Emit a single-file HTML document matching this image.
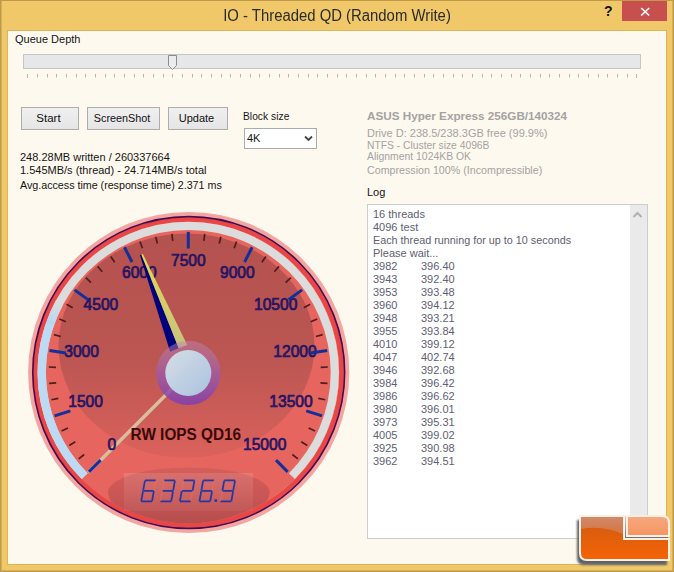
<!DOCTYPE html>
<html><head><meta charset="utf-8">
<style>
*{margin:0;padding:0;box-sizing:border-box}
html,body{width:674px;height:572px;overflow:hidden;background:#f0c869}
body{position:relative;font-family:"Liberation Sans",sans-serif}
.a{position:absolute;white-space:nowrap}
#frame{position:absolute;left:0;top:0;width:674px;height:572px;background:#f0c869;border:1px solid #c09a48;box-shadow:inset 1px 0 0 #d4b058, inset -1px 0 0 #d4b058, inset 0 -1px 0 #d4b058}
#client{position:absolute;left:7px;top:30px;width:660px;height:535px;background:#fef9ee;border:1px solid #dcb656}
.title{left:0;width:674px;text-align:center;top:7.3px;font-size:16px;color:#2b2b2b;transform:scaleX(0.93);transform-origin:337px 0}
.btn{position:absolute;height:23px;top:107px;border:1px solid #adadad;background:linear-gradient(#f0f0f0,#e5e5e5);font-size:11.5px;color:#111;text-align:center;line-height:21px}
.t11{font-size:11px;color:#151515}
.gray{font-size:11px;color:#a3a3a3}
.log{font-size:11px;color:#606070;line-height:13px}
</style></head><body>
<div id="frame"></div>
<div id="client"></div>
<div class="a title">IO - Threaded QD (Random Write)</div>
<!-- help & close -->
<div class="a" style="left:604px;top:3px;font-size:14px;font-weight:bold;color:#111">?</div>
<div class="a" style="left:622px;top:1px;width:45px;height:20px;background:#c7504f"></div>
<svg class="a" style="left:0;top:0" width="674" height="30"><path d="M641.2 8 L649.2 15.5 M649.2 8 L641.2 15.5" stroke="#fff" stroke-width="1.6"/></svg>

<div class="a t11" style="left:15px;top:33px;font-size:11px">Queue Depth</div>
<!-- slider -->
<div class="a" style="left:23px;top:54px;width:618px;height:15px;background:#e6e7e8;border:1px solid #c6c6c6"></div>
<svg class="a" style="left:0;top:50px" width="674" height="32"><line x1="27.5" y1="24" x2="27.5" y2="28" stroke="#b4b4b4" stroke-width="1"></line><line x1="37.5" y1="24" x2="37.5" y2="27.5" stroke="#b4b4b4" stroke-width="1"></line><line x1="47.5" y1="24" x2="47.5" y2="27.5" stroke="#b4b4b4" stroke-width="1"></line><line x1="56.5" y1="24" x2="56.5" y2="27.5" stroke="#b4b4b4" stroke-width="1"></line><line x1="66.5" y1="24" x2="66.5" y2="27.5" stroke="#b4b4b4" stroke-width="1"></line><line x1="76.5" y1="24" x2="76.5" y2="27.5" stroke="#b4b4b4" stroke-width="1"></line><line x1="85.5" y1="24" x2="85.5" y2="27.5" stroke="#b4b4b4" stroke-width="1"></line><line x1="95.5" y1="24" x2="95.5" y2="27.5" stroke="#b4b4b4" stroke-width="1"></line><line x1="105.5" y1="24" x2="105.5" y2="27.5" stroke="#b4b4b4" stroke-width="1"></line><line x1="114.5" y1="24" x2="114.5" y2="27.5" stroke="#b4b4b4" stroke-width="1"></line><line x1="124.5" y1="24" x2="124.5" y2="27.5" stroke="#b4b4b4" stroke-width="1"></line><line x1="134.5" y1="24" x2="134.5" y2="27.5" stroke="#b4b4b4" stroke-width="1"></line><line x1="143.5" y1="24" x2="143.5" y2="27.5" stroke="#b4b4b4" stroke-width="1"></line><line x1="153.5" y1="24" x2="153.5" y2="27.5" stroke="#b4b4b4" stroke-width="1"></line><line x1="163.5" y1="24" x2="163.5" y2="27.5" stroke="#b4b4b4" stroke-width="1"></line><line x1="172.5" y1="24" x2="172.5" y2="27.5" stroke="#b4b4b4" stroke-width="1"></line><line x1="182.5" y1="24" x2="182.5" y2="27.5" stroke="#b4b4b4" stroke-width="1"></line><line x1="192.5" y1="24" x2="192.5" y2="27.5" stroke="#b4b4b4" stroke-width="1"></line><line x1="201.5" y1="24" x2="201.5" y2="27.5" stroke="#b4b4b4" stroke-width="1"></line><line x1="211.5" y1="24" x2="211.5" y2="27.5" stroke="#b4b4b4" stroke-width="1"></line><line x1="221.5" y1="24" x2="221.5" y2="27.5" stroke="#b4b4b4" stroke-width="1"></line><line x1="230.5" y1="24" x2="230.5" y2="27.5" stroke="#b4b4b4" stroke-width="1"></line><line x1="240.5" y1="24" x2="240.5" y2="27.5" stroke="#b4b4b4" stroke-width="1"></line><line x1="250.5" y1="24" x2="250.5" y2="27.5" stroke="#b4b4b4" stroke-width="1"></line><line x1="259.5" y1="24" x2="259.5" y2="27.5" stroke="#b4b4b4" stroke-width="1"></line><line x1="269.5" y1="24" x2="269.5" y2="27.5" stroke="#b4b4b4" stroke-width="1"></line><line x1="279.5" y1="24" x2="279.5" y2="27.5" stroke="#b4b4b4" stroke-width="1"></line><line x1="288.5" y1="24" x2="288.5" y2="27.5" stroke="#b4b4b4" stroke-width="1"></line><line x1="298.5" y1="24" x2="298.5" y2="27.5" stroke="#b4b4b4" stroke-width="1"></line><line x1="308.5" y1="24" x2="308.5" y2="27.5" stroke="#b4b4b4" stroke-width="1"></line><line x1="317.5" y1="24" x2="317.5" y2="27.5" stroke="#b4b4b4" stroke-width="1"></line><line x1="327.5" y1="24" x2="327.5" y2="27.5" stroke="#b4b4b4" stroke-width="1"></line><line x1="337.5" y1="24" x2="337.5" y2="27.5" stroke="#b4b4b4" stroke-width="1"></line><line x1="346.5" y1="24" x2="346.5" y2="27.5" stroke="#b4b4b4" stroke-width="1"></line><line x1="356.5" y1="24" x2="356.5" y2="27.5" stroke="#b4b4b4" stroke-width="1"></line><line x1="366.5" y1="24" x2="366.5" y2="27.5" stroke="#b4b4b4" stroke-width="1"></line><line x1="375.5" y1="24" x2="375.5" y2="27.5" stroke="#b4b4b4" stroke-width="1"></line><line x1="385.5" y1="24" x2="385.5" y2="27.5" stroke="#b4b4b4" stroke-width="1"></line><line x1="395.5" y1="24" x2="395.5" y2="27.5" stroke="#b4b4b4" stroke-width="1"></line><line x1="404.5" y1="24" x2="404.5" y2="27.5" stroke="#b4b4b4" stroke-width="1"></line><line x1="414.5" y1="24" x2="414.5" y2="27.5" stroke="#b4b4b4" stroke-width="1"></line><line x1="424.5" y1="24" x2="424.5" y2="27.5" stroke="#b4b4b4" stroke-width="1"></line><line x1="433.5" y1="24" x2="433.5" y2="27.5" stroke="#b4b4b4" stroke-width="1"></line><line x1="443.5" y1="24" x2="443.5" y2="27.5" stroke="#b4b4b4" stroke-width="1"></line><line x1="453.5" y1="24" x2="453.5" y2="27.5" stroke="#b4b4b4" stroke-width="1"></line><line x1="462.5" y1="24" x2="462.5" y2="27.5" stroke="#b4b4b4" stroke-width="1"></line><line x1="472.5" y1="24" x2="472.5" y2="27.5" stroke="#b4b4b4" stroke-width="1"></line><line x1="482.5" y1="24" x2="482.5" y2="27.5" stroke="#b4b4b4" stroke-width="1"></line><line x1="491.5" y1="24" x2="491.5" y2="27.5" stroke="#b4b4b4" stroke-width="1"></line><line x1="501.5" y1="24" x2="501.5" y2="27.5" stroke="#b4b4b4" stroke-width="1"></line><line x1="511.5" y1="24" x2="511.5" y2="27.5" stroke="#b4b4b4" stroke-width="1"></line><line x1="520.5" y1="24" x2="520.5" y2="27.5" stroke="#b4b4b4" stroke-width="1"></line><line x1="530.5" y1="24" x2="530.5" y2="27.5" stroke="#b4b4b4" stroke-width="1"></line><line x1="540.5" y1="24" x2="540.5" y2="27.5" stroke="#b4b4b4" stroke-width="1"></line><line x1="549.5" y1="24" x2="549.5" y2="27.5" stroke="#b4b4b4" stroke-width="1"></line><line x1="559.5" y1="24" x2="559.5" y2="27.5" stroke="#b4b4b4" stroke-width="1"></line><line x1="569.5" y1="24" x2="569.5" y2="27.5" stroke="#b4b4b4" stroke-width="1"></line><line x1="578.5" y1="24" x2="578.5" y2="27.5" stroke="#b4b4b4" stroke-width="1"></line><line x1="588.5" y1="24" x2="588.5" y2="27.5" stroke="#b4b4b4" stroke-width="1"></line><line x1="598.5" y1="24" x2="598.5" y2="27.5" stroke="#b4b4b4" stroke-width="1"></line><line x1="607.5" y1="24" x2="607.5" y2="27.5" stroke="#b4b4b4" stroke-width="1"></line><line x1="617.5" y1="24" x2="617.5" y2="27.5" stroke="#b4b4b4" stroke-width="1"></line><line x1="627.5" y1="24" x2="627.5" y2="27.5" stroke="#b4b4b4" stroke-width="1"></line><line x1="636.5" y1="24" x2="636.5" y2="28" stroke="#b4b4b4" stroke-width="1"></line></svg>
<svg class="a" style="left:166px;top:53px" width="14" height="20"><path d="M2.5 2.5 H10.5 V12.5 L6.5 16.5 L2.5 12.5 Z" fill="#ececec" stroke="#8c8c8c" stroke-width="1"/></svg>

<div class="btn" style="left:21px;width:58px;text-indent:-3px">Start</div>
<div class="btn" style="left:87px;width:73px;font-size:10.8px;text-indent:-3px">ScreenShot</div>
<div class="btn" style="left:168px;width:60px;font-size:11px;text-indent:-3px">Update</div>

<div class="a t11" style="left:243px;top:111px;font-size:10.2px;letter-spacing:0.05px">Block size</div>
<div class="a" style="left:244px;top:128px;width:73px;height:21px;background:#fff;border:1px solid #ababab"></div>
<div class="a t11" style="left:247px;top:132px">4K</div>
<svg class="a" style="left:300px;top:132px" width="16" height="12"><path d="M5 4.5 L8.5 8 L12 4.5" fill="none" stroke="#444" stroke-width="1.8"/></svg>

<div class="a t11" style="left:20px;top:151px">248.28MB written / 260337664</div>
<div class="a t11" style="left:20px;top:164px">1.545MB/s (thread) - 24.714MB/s total</div>
<div class="a t11" style="left:20px;top:179px;font-size:10.75px;letter-spacing:-0.03px">Avg.access time (response time) 2.371 ms</div>

<div class="a gray" style="left:367px;top:109px;font-weight:bold;font-size:11.7px">ASUS Hyper Express 256GB/140324</div>
<div class="a gray" style="left:367px;top:127px">Drive D: 238.5/238.3GB free (99.9%)</div>
<div class="a gray" style="left:367px;top:140px;font-size:10.3px">NTFS - Cluster size 4096B</div>
<div class="a gray" style="left:367px;top:151px;font-size:10.4px">Alignment 1024KB OK</div>
<div class="a gray" style="left:367px;top:164px;font-size:10.7px">Compression 100% (Incompressible)</div>
<div class="a t11" style="left:367px;top:186px">Log</div>

<!-- log box -->
<div class="a" style="left:367px;top:204px;width:281px;height:335px;background:#fff;border:1px solid #cdcdcd"></div>
<div class="a" style="left:630px;top:205px;width:17px;height:333px;background:#eaeaea"></div>
<svg class="a" style="left:628px;top:206px" width="20" height="16"><path d="M5.5 11 L9.5 7 L13.5 11" fill="none" stroke="#b0b0b0" stroke-width="2"/></svg>
<div class="a log" style="left:373px;top:208px">16 threads<br>4096 test<br><span style="font-size:10.8px">Each thread running for up to 10 seconds</span><br>Please wait...</div>
<div class="a log" style="left:373px;top:260px">3982<br>3943<br>3953<br>3960<br>3948<br>3955<br>4010<br>4047<br>3946<br>3984<br>3986<br>3980<br>3973<br>4005<br>3925<br>3962</div>
<div class="a log" style="left:421px;top:260px">396.40<br>392.40<br>393.48<br>394.12<br>393.21<br>393.84<br>399.12<br>402.74<br>392.68<br>396.42<br>396.62<br>396.01<br>395.31<br>399.02<br>390.98<br>394.51</div>

<svg class="a" style="left:0;top:0" width="674" height="572"><defs><clipPath id="faceclip"><circle cx="188.3" cy="372.5" r="150.8"></circle></clipPath><linearGradient id="ringg" x1="0" y1="0" x2="0" y2="1"><stop offset="0" stop-color="#c088b0" stop-opacity="0.45"></stop><stop offset="0.5" stop-color="#9c5cac" stop-opacity="0.72"></stop><stop offset="1" stop-color="#8440a8" stop-opacity="0.95"></stop></linearGradient><linearGradient id="hubg" x1="0" y1="0" x2="1" y2="1"><stop offset="0" stop-color="#d6dde6"></stop><stop offset="1" stop-color="#a9c3df"></stop></linearGradient><linearGradient id="darkg" x1="0" y1="0" x2="0" y2="1"><stop offset="0" stop-color="#b4524f"></stop><stop offset="0.55" stop-color="#bb5652"></stop><stop offset="0.8" stop-color="#cc5c57"></stop><stop offset="1" stop-color="#dc625c"></stop></linearGradient><linearGradient id="dispg" x1="0" y1="0" x2="0" y2="1"><stop offset="0" stop-color="#d45e5a"></stop><stop offset="0.5" stop-color="#c85654"></stop><stop offset="1" stop-color="#b24e4e"></stop></linearGradient><linearGradient id="rectg" x1="0" y1="0" x2="0" y2="1"><stop offset="0" stop-color="#ffffff" stop-opacity="0.12"></stop><stop offset="1" stop-color="#ffffff" stop-opacity="0.04"></stop></linearGradient><linearGradient id="blueend" gradientUnits="userSpaceOnUse" x1="50.203" y1="323.597" x2="59.553" y2="302.596"><stop offset="0" stop-color="#b8d6f2"></stop><stop offset="1" stop-color="#dcdcdc"></stop></linearGradient><linearGradient id="ndl" x1="0" y1="0" x2="0" y2="1"><stop offset="0" stop-color="#e2dc50"></stop><stop offset="1" stop-color="#c8c080"></stop></linearGradient></defs><circle cx="188.7" cy="372.5" r="160.6" fill="#f3a6a1"></circle><circle cx="188.6" cy="372.5" r="152.9" fill="none" stroke="#ea4646" stroke-width="4.6"></circle><circle cx="188.7" cy="372.5" r="155.9" fill="none" stroke="#4a0a4c" stroke-width="1.7"></circle><circle cx="188.3" cy="372.5" r="150.8" fill="#e6665f"></circle><g clip-path="url(#faceclip)"><ellipse cx="186.5" cy="345.8" rx="128" ry="112.2" fill="url(#darkg)"></ellipse><path d="M108 492 A80.8 24.5 0 0 1 269.6 492 A80.8 34 0 0 1 108 492 Z" fill="url(#dispg)"></path></g><rect x="124" y="473" width="129" height="38" fill="url(#rectg)"></rect><path d="M84.67 476.13 A146.55 146.55 0 1 1 291.93 476.13" fill="none" stroke="#dcdcdc" stroke-width="8.3"></path><path d="M84.67 476.13 A146.55 146.55 0 0 1 50.16 323.58" fill="none" stroke="#bddaf5" stroke-width="8.3"></path><path d="M49.99 324.06 A146.55 146.55 0 0 1 59.51 302.57" fill="none" stroke="url(#blueend)" stroke-width="8.3"></path><line x1="188.3" y1="372.5" x2="88.244" y2="472.556" stroke="#d8be9e" stroke-width="3.4"></line><text x="111.9" y="450.2" text-anchor="middle" textLength="8.7" lengthAdjust="spacingAndGlyphs" font-family="Liberation Sans" font-size="15.9" fill="#2a1e80" stroke="#1e0e56" stroke-width="0.7">0</text><text x="85.6" y="407.2" text-anchor="middle" textLength="34.6" lengthAdjust="spacingAndGlyphs" font-family="Liberation Sans" font-size="15.9" fill="#2a1e80" stroke="#1e0e56" stroke-width="0.7">1500</text><text x="81.6" y="356.9" text-anchor="middle" textLength="34.6" lengthAdjust="spacingAndGlyphs" font-family="Liberation Sans" font-size="15.9" fill="#2a1e80" stroke="#1e0e56" stroke-width="0.7">3000</text><text x="100.9" y="310.3" text-anchor="middle" textLength="34.6" lengthAdjust="spacingAndGlyphs" font-family="Liberation Sans" font-size="15.9" fill="#2a1e80" stroke="#1e0e56" stroke-width="0.7">4500</text><text x="139.3" y="277.6" text-anchor="middle" textLength="34.6" lengthAdjust="spacingAndGlyphs" font-family="Liberation Sans" font-size="15.9" fill="#2a1e80" stroke="#1e0e56" stroke-width="0.7">6000</text><text x="188.3" y="265.8" text-anchor="middle" textLength="34.6" lengthAdjust="spacingAndGlyphs" font-family="Liberation Sans" font-size="15.9" fill="#2a1e80" stroke="#1e0e56" stroke-width="0.7">7500</text><text x="237.3" y="277.6" text-anchor="middle" textLength="34.6" lengthAdjust="spacingAndGlyphs" font-family="Liberation Sans" font-size="15.9" fill="#2a1e80" stroke="#1e0e56" stroke-width="0.7">9000</text><text x="275.7" y="310.3" text-anchor="middle" textLength="43.3" lengthAdjust="spacingAndGlyphs" font-family="Liberation Sans" font-size="15.9" fill="#2a1e80" stroke="#1e0e56" stroke-width="0.7">10500</text><text x="295.0" y="356.9" text-anchor="middle" textLength="43.3" lengthAdjust="spacingAndGlyphs" font-family="Liberation Sans" font-size="15.9" fill="#2a1e80" stroke="#1e0e56" stroke-width="0.7">12000</text><text x="291.0" y="407.2" text-anchor="middle" textLength="43.3" lengthAdjust="spacingAndGlyphs" font-family="Liberation Sans" font-size="15.9" fill="#2a1e80" stroke="#1e0e56" stroke-width="0.7">13500</text><text x="264.7" y="450.2" text-anchor="middle" textLength="43.3" lengthAdjust="spacingAndGlyphs" font-family="Liberation Sans" font-size="15.9" fill="#2a1e80" stroke="#1e0e56" stroke-width="0.7">15000</text><line x1="100.619" y1="460.181" x2="88.881" y2="471.919" stroke="#12309a" stroke-width="3"></line><line x1="84.246" y1="454.53" x2="78.67" y2="458.926" stroke="#4e1e1e" stroke-width="1.7"></line><line x1="75.325" y1="441.731" x2="69.271" y2="445.441" stroke="#4e1e1e" stroke-width="1.7"></line><line x1="67.971" y1="427.972" x2="61.523" y2="430.945" stroke="#4e1e1e" stroke-width="1.7"></line><line x1="70.369" y1="410.818" x2="54.581" y2="415.948" stroke="#12309a" stroke-width="3"></line><line x1="58.346" y1="398.349" x2="51.382" y2="399.735" stroke="#4e1e1e" stroke-width="1.7"></line><line x1="56.208" y1="382.896" x2="49.13" y2="383.453" stroke="#4e1e1e" stroke-width="1.7"></line><line x1="55.902" y1="367.298" x2="48.808" y2="367.019" stroke="#4e1e1e" stroke-width="1.7"></line><line x1="65.827" y1="353.102" x2="49.431" y2="350.505" stroke="#12309a" stroke-width="3"></line><line x1="60.775" y1="336.534" x2="53.941" y2="334.607" stroke="#4e1e1e" stroke-width="1.7"></line><line x1="65.886" y1="321.794" x2="59.326" y2="319.077" stroke="#4e1e1e" stroke-width="1.7"></line><line x1="72.694" y1="307.758" x2="66.5" y2="304.288" stroke="#4e1e1e" stroke-width="1.7"></line><line x1="87.982" y1="299.615" x2="74.552" y2="289.857" stroke="#12309a" stroke-width="3"></line><line x1="91.002" y1="282.559" x2="85.789" y2="277.739" stroke="#4e1e1e" stroke-width="1.7"></line><line x1="102.248" y1="271.746" x2="97.637" y2="266.347" stroke="#4e1e1e" stroke-width="1.7"></line><line x1="114.687" y1="262.33" x2="110.742" y2="256.427" stroke="#4e1e1e" stroke-width="1.7"></line><line x1="132.005" y1="262.015" x2="124.469" y2="247.224" stroke="#12309a" stroke-width="3"></line><line x1="142.439" y1="248.19" x2="139.982" y2="241.528" stroke="#4e1e1e" stroke-width="1.7"></line><line x1="157.368" y1="243.661" x2="155.711" y2="236.757" stroke="#4e1e1e" stroke-width="1.7"></line><line x1="172.726" y1="240.918" x2="171.892" y2="233.868" stroke="#4e1e1e" stroke-width="1.7"></line><line x1="188.3" y1="248.5" x2="188.3" y2="231.9" stroke="#12309a" stroke-width="3"></line><line x1="203.874" y1="240.918" x2="204.708" y2="233.868" stroke="#4e1e1e" stroke-width="1.7"></line><line x1="219.232" y1="243.661" x2="220.889" y2="236.757" stroke="#4e1e1e" stroke-width="1.7"></line><line x1="234.161" y1="248.19" x2="236.618" y2="241.528" stroke="#4e1e1e" stroke-width="1.7"></line><line x1="244.595" y1="262.015" x2="252.131" y2="247.224" stroke="#12309a" stroke-width="3"></line><line x1="261.913" y1="262.33" x2="265.858" y2="256.427" stroke="#4e1e1e" stroke-width="1.7"></line><line x1="274.352" y1="271.746" x2="278.963" y2="266.347" stroke="#4e1e1e" stroke-width="1.7"></line><line x1="285.598" y1="282.559" x2="290.811" y2="277.739" stroke="#4e1e1e" stroke-width="1.7"></line><line x1="288.618" y1="299.615" x2="302.048" y2="289.857" stroke="#12309a" stroke-width="3"></line><line x1="303.906" y1="307.758" x2="310.1" y2="304.288" stroke="#4e1e1e" stroke-width="1.7"></line><line x1="310.714" y1="321.794" x2="317.274" y2="319.077" stroke="#4e1e1e" stroke-width="1.7"></line><line x1="315.825" y1="336.534" x2="322.659" y2="334.607" stroke="#4e1e1e" stroke-width="1.7"></line><line x1="310.773" y1="353.102" x2="327.169" y2="350.505" stroke="#12309a" stroke-width="3"></line><line x1="320.698" y1="367.298" x2="327.792" y2="367.019" stroke="#4e1e1e" stroke-width="1.7"></line><line x1="320.392" y1="382.896" x2="327.47" y2="383.453" stroke="#4e1e1e" stroke-width="1.7"></line><line x1="318.254" y1="398.349" x2="325.218" y2="399.735" stroke="#4e1e1e" stroke-width="1.7"></line><line x1="306.231" y1="410.818" x2="322.019" y2="415.948" stroke="#12309a" stroke-width="3"></line><line x1="308.629" y1="427.972" x2="315.077" y2="430.945" stroke="#4e1e1e" stroke-width="1.7"></line><line x1="301.275" y1="441.731" x2="307.329" y2="445.441" stroke="#4e1e1e" stroke-width="1.7"></line><line x1="292.354" y1="454.53" x2="297.93" y2="458.926" stroke="#4e1e1e" stroke-width="1.7"></line><line x1="275.981" y1="460.181" x2="287.719" y2="471.919" stroke="#12309a" stroke-width="3"></line><polygon points="141.342,254.5 139.856,255.092 170.139,351.744 178.687,348.343" fill="#00007c"></polygon><polygon points="141.342,254.5 142.829,253.909 187.235,344.941 178.687,348.343" fill="url(#ndl)"></polygon><circle cx="188.3" cy="372.9" r="32.2" fill="url(#ringg)"></circle><circle cx="188.3" cy="373" r="23" fill="url(#hubg)"></circle><text x="130.6" y="439.6" textLength="110.5" lengthAdjust="spacingAndGlyphs" font-family="Liberation Sans" font-weight="bold" font-size="15.6" fill="#3a0707">RW IOPS QD16</text><line x1="144.98" y1="480.40" x2="155.78" y2="480.40" stroke="#2238a6" stroke-width="1.75" opacity="1"></line><line x1="155.73" y1="480.70" x2="153.94" y2="490.60" stroke="#ec8080" stroke-width="1.4" opacity="0.25"></line><line x1="153.84" y1="491.20" x2="152.05" y2="501.10" stroke="#2238a6" stroke-width="1.75" opacity="1"></line><line x1="141.20" y1="501.40" x2="152.00" y2="501.40" stroke="#2238a6" stroke-width="1.75" opacity="1"></line><line x1="143.04" y1="491.20" x2="141.25" y2="501.10" stroke="#2238a6" stroke-width="1.75" opacity="1"></line><line x1="144.93" y1="480.70" x2="143.14" y2="490.60" stroke="#2238a6" stroke-width="1.75" opacity="1"></line><line x1="143.39" y1="490.90" x2="153.59" y2="490.90" stroke="#2238a6" stroke-width="1.75" opacity="1"></line><line x1="164.18" y1="480.40" x2="174.98" y2="480.40" stroke="#2238a6" stroke-width="1.75" opacity="1"></line><line x1="174.93" y1="480.70" x2="173.14" y2="490.60" stroke="#2238a6" stroke-width="1.75" opacity="1"></line><line x1="173.04" y1="491.20" x2="171.25" y2="501.10" stroke="#2238a6" stroke-width="1.75" opacity="1"></line><line x1="160.40" y1="501.40" x2="171.20" y2="501.40" stroke="#2238a6" stroke-width="1.75" opacity="1"></line><line x1="162.24" y1="491.20" x2="160.45" y2="501.10" stroke="#ec8080" stroke-width="1.4" opacity="0.25"></line><line x1="164.13" y1="480.70" x2="162.34" y2="490.60" stroke="#ec8080" stroke-width="1.4" opacity="0.25"></line><line x1="162.59" y1="490.90" x2="172.79" y2="490.90" stroke="#2238a6" stroke-width="1.75" opacity="1"></line><line x1="183.68" y1="480.40" x2="194.48" y2="480.40" stroke="#2238a6" stroke-width="1.75" opacity="1"></line><line x1="194.43" y1="480.70" x2="192.64" y2="490.60" stroke="#2238a6" stroke-width="1.75" opacity="1"></line><line x1="192.54" y1="491.20" x2="190.75" y2="501.10" stroke="#ec8080" stroke-width="1.4" opacity="0.25"></line><line x1="179.90" y1="501.40" x2="190.70" y2="501.40" stroke="#2238a6" stroke-width="1.75" opacity="1"></line><line x1="181.74" y1="491.20" x2="179.95" y2="501.10" stroke="#2238a6" stroke-width="1.75" opacity="1"></line><line x1="183.63" y1="480.70" x2="181.84" y2="490.60" stroke="#ec8080" stroke-width="1.4" opacity="0.25"></line><line x1="182.09" y1="490.90" x2="192.29" y2="490.90" stroke="#2238a6" stroke-width="1.75" opacity="1"></line><line x1="203.18" y1="480.40" x2="213.98" y2="480.40" stroke="#2238a6" stroke-width="1.75" opacity="1"></line><line x1="213.93" y1="480.70" x2="212.14" y2="490.60" stroke="#ec8080" stroke-width="1.4" opacity="0.25"></line><line x1="212.04" y1="491.20" x2="210.25" y2="501.10" stroke="#2238a6" stroke-width="1.75" opacity="1"></line><line x1="199.40" y1="501.40" x2="210.20" y2="501.40" stroke="#2238a6" stroke-width="1.75" opacity="1"></line><line x1="201.24" y1="491.20" x2="199.45" y2="501.10" stroke="#2238a6" stroke-width="1.75" opacity="1"></line><line x1="203.13" y1="480.70" x2="201.34" y2="490.60" stroke="#2238a6" stroke-width="1.75" opacity="1"></line><line x1="201.59" y1="490.90" x2="211.79" y2="490.90" stroke="#2238a6" stroke-width="1.75" opacity="1"></line><line x1="224.28" y1="480.40" x2="235.08" y2="480.40" stroke="#2238a6" stroke-width="1.75" opacity="1"></line><line x1="235.03" y1="480.70" x2="233.24" y2="490.60" stroke="#2238a6" stroke-width="1.75" opacity="1"></line><line x1="233.14" y1="491.20" x2="231.35" y2="501.10" stroke="#2238a6" stroke-width="1.75" opacity="1"></line><line x1="220.50" y1="501.40" x2="231.30" y2="501.40" stroke="#2238a6" stroke-width="1.75" opacity="1"></line><line x1="222.34" y1="491.20" x2="220.55" y2="501.10" stroke="#ec8080" stroke-width="1.4" opacity="0.25"></line><line x1="224.23" y1="480.70" x2="222.44" y2="490.60" stroke="#2238a6" stroke-width="1.75" opacity="1"></line><line x1="222.69" y1="490.90" x2="232.89" y2="490.90" stroke="#2238a6" stroke-width="1.75" opacity="1"></line><rect x="214.5" y="499.3" width="2.6" height="2.6" fill="#2238a6"></rect></svg>

<!-- logo -->
<svg class="a" style="left:0;top:0" width="674" height="572">
<defs>
<linearGradient id="lg1" x1="0" y1="0" x2="0" y2="1"><stop offset="0" stop-color="#cf5a12"/><stop offset="1" stop-color="#f56405"/></linearGradient>
<linearGradient id="lg3" x1="0" y1="0" x2="0" y2="1"><stop offset="0" stop-color="#d08a66"/><stop offset="1" stop-color="#d57444"/></linearGradient>
<linearGradient id="lg2" x1="0" y1="0" x2="0" y2="1"><stop offset="0" stop-color="#f7a97e"/><stop offset="1" stop-color="#f59562"/></linearGradient>
<linearGradient id="shg" x1="0" y1="0" x2="0" y2="1"><stop offset="0" stop-color="#d0d4d8"/><stop offset="1" stop-color="#60666c"/></linearGradient>
<filter id="blur1" x="-10%" y="-10%" width="120%" height="130%"><feGaussianBlur stdDeviation="0.9"/></filter>
</defs>
<path d="M577 520 H622 V543 H667 V565 H584 Q577 565 577 558 Z" fill="#5c6266" filter="url(#blur1)"/>
<rect x="622" y="516" width="46" height="24" fill="url(#shg)"/>
<path d="M580 516 H624 V539 H669 V560 H587 Q580 560 580 553 Z" fill="url(#lg1)" stroke="#fff0e6" stroke-width="2"/>
<path d="M581 517 H623 V534 Q602 525 581 529 Z" fill="url(#lg3)"/>
<path d="M627 516 H662 Q669 516 669 523 V536 H627 Z" fill="url(#lg2)" stroke="#fff0e6" stroke-width="2"/>
</svg>


</body></html>
